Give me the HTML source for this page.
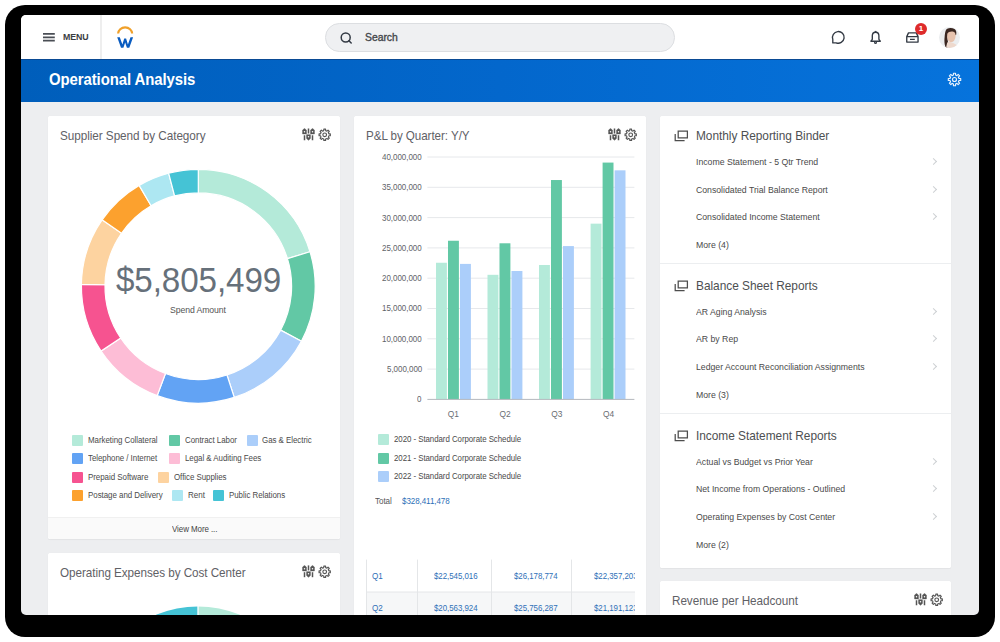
<!DOCTYPE html>
<html><head><meta charset="utf-8">
<style>
*{margin:0;padding:0;box-sizing:border-box}
html,body{width:1000px;height:642px;overflow:hidden;background:#fff;font-family:"Liberation Sans",sans-serif}
#frame{position:absolute;left:5px;top:5px;width:990px;height:632px;background:#000;border-radius:20px}
#screen{position:absolute;left:21px;top:15px;width:958px;height:600px;border-radius:5px;overflow:hidden;background:#edeef0}
#in{position:absolute;left:-21px;top:-15px;width:1000px;height:642px}
.a{position:absolute;white-space:nowrap}
#hdr{position:absolute;left:21px;top:15px;width:958px;height:44px;background:#fff}
#band{position:absolute;left:21px;top:59px;width:958px;height:43px;background:linear-gradient(90deg,#005ebb 0%,#0367cc 50%,#0673dc 100%)}
#band:before{content:"";position:absolute;left:0;top:0;right:0;height:1px;background:#0a4a94}
.card{position:absolute;background:#fff;border-radius:1.5px;box-shadow:0 0 1px rgba(0,0,0,.07),0 1px 1px rgba(0,0,0,.04)}
.ttl{position:absolute;font-size:12.5px;color:#5f6166;white-space:nowrap}
.sw{position:absolute;width:11px;height:11px;border-radius:1px}
.lg{position:absolute;font-size:9px;color:#444;white-space:nowrap}
.li{position:absolute;font-size:9.2px;color:#333;white-space:nowrap}
.st{position:absolute;font-size:12.5px;color:#333;white-space:nowrap}
.ax{position:absolute;font-size:9px;color:#5f6368;text-align:right;width:60px;white-space:nowrap}
.tb{position:absolute;font-size:9px;color:#2e6fb7;white-space:nowrap}
.chev{position:absolute;width:5px;height:5px;border-right:1px solid #cdd0d3;border-top:1px solid #cdd0d3;transform:rotate(45deg)}
</style></head><body>
<div id="frame"></div>
<div id="screen"><div id="in">

  <div id="hdr"></div>
  <div id="band"></div>
  <svg class="a" style="left:40px;top:30px" width="18" height="14" viewBox="40 30 18 14"><path d="M43 33.9H54.8M43 37.3H54.8M43 40.7H54.8" stroke="#4a4e55" stroke-width="1.7"/></svg>
  <div class="a" style="left:62.60px;top:33.33px;font-size:9.3px;line-height:9.3px;letter-spacing:-0.133px;color:#3a3d42;font-weight:bold;transform:scaleX(0.9451);transform-origin:0.00px 0;">MENU</div>
  <div class="a" style="left:100px;top:15px;width:1.5px;height:44px;background:#eeeeee"></div>
  <svg class="a" style="left:110px;top:22px" width="30" height="30" viewBox="110 22 30 30">
    <path d="M118.15 33.6 A7 6.2 0 0 1 132.15 33.6" fill="none" stroke="#f0a02a" stroke-width="2.2"/>
    <path d="M117.2 37.2 L119.8 37.2 L122.4 44.4 L124.2 38.6 L126.1 38.6 L127.9 44.4 L130.5 37.2 L133.1 37.2 L129.3 47.8 L126.9 47.8 L125.15 42.6 L123.4 47.8 L121 47.8 Z" fill="#0a5cc0"/>
  </svg>
  <div class="a" style="left:325px;top:23px;width:350px;height:28.6px;border-radius:14.3px;background:#eff0f2;border:1px solid #dcdee1"></div>
  <svg class="a" style="left:338px;top:30px" width="16" height="16" viewBox="0 0 16 16">
    <circle cx="7.7" cy="7.5" r="4.5" fill="none" stroke="#333a44" stroke-width="1.5"/>
    <path d="M10.9 10.7 L13.2 13" stroke="#333a44" stroke-width="1.5" stroke-linecap="round"/>
  </svg>
  <div class="a" style="left:365.20px;top:32.80px;font-size:10.4px;line-height:10.4px;letter-spacing:-0.006px;color:#45484c;transform:scaleX(0.9964);transform-origin:0.00px 0;-webkit-text-stroke:0.35px #45484c;">Search</div>
  <svg class="a" style="left:828px;top:27px" width="20" height="20" viewBox="0 0 20 20">
    <path d="M4.8 15.9 L4.80 12.40 A5.85 5.85 0 1 1 8.11 15.82 Z" fill="none" stroke="#333a44" stroke-width="1.35" stroke-linejoin="round"/>
  </svg>
  <svg class="a" style="left:866px;top:27px" width="20" height="20" viewBox="0 0 20 20">
    <path d="M4.9 14.2 H14.3 L12.9 12.3 V8.8 C12.9 6.6 11.4 5.2 9.6 5.2 C7.8 5.2 6.3 6.6 6.3 8.8 V12.3 Z" fill="none" stroke="#333a44" stroke-width="1.35" stroke-linejoin="round"/>
    <path d="M8.8 5 L9.6 3.9 L10.4 5Z" fill="#333a44" stroke="#333a44" stroke-width=".6" stroke-linejoin="round"/>
    <circle cx="9.5" cy="15.6" r=".95" fill="none" stroke="#333a44" stroke-width="1.1"/>
  </svg>
  <svg class="a" style="left:902px;top:27px" width="20" height="20" viewBox="0 0 20 20">
    <path d="M4.75 9.6 L6.5 5.9 H14.3 L16.05 9.6 V15.05 H4.75 Z M4.75 9.6 H16.05" fill="none" stroke="#333a44" stroke-width="1.35" stroke-linejoin="round"/>
    <path d="M8 12.4 H12.8" stroke="#333a44" stroke-width="1.3"/>
  </svg>
  <div class="a" style="left:914.8px;top:23.3px;width:12.2px;height:12.2px;border-radius:50%;background:#de2b2b;color:#fff;font-size:8px;font-weight:bold;text-align:center;line-height:12.2px">1</div>
  <div class="a" style="left:939px;top:26.8px;width:21px;height:21px;border-radius:50%;overflow:hidden;background:#ebedef">
  <svg class="a" style="left:0;top:0" width="21" height="21" viewBox="939 26.8 21 21">
      <path d="M945.5 31 C946 27.5 951.5 26.8 954.5 28.8 C956.6 30.2 956.6 33 956 35 L952 33 L947.5 36 C947.3 39 947.8 42 949 44.5 C948.6 46 947.6 47.5 946.2 48 C944.3 45 944.2 40.5 944.6 37 C944.8 34.5 945 32.5 945.5 31Z" fill="#3a2620"/>
      <path d="M947.3 33.5 C948.5 31 953 30.5 955 32.5 C956 34.5 955.8 38 954.2 40.2 C952.6 42.2 949.8 42.2 948.4 40.5 C947.2 38.8 946.9 35.6 947.3 33.5Z" fill="#e6c2ad"/>
      <path d="M947.5 42 C949 41.5 952 41.8 954.5 43.5 C957 44.5 958 46.5 958.5 49 L946 49 C946.3 46 946.8 43.5 947.5 42Z" fill="#eed9cd"/>
  </svg></div>
  <div class="a" style="left:48.80px;top:71.59px;font-size:15.6px;line-height:15.6px;letter-spacing:-0.090px;color:#fff;font-weight:bold;transform:scaleX(0.9575);transform-origin:0.00px 0;">Operational Analysis</div>
  <svg class="a" style="left:946px;top:71px" width="17" height="17" viewBox="0 0 17 17">
    <path d="M7.46 4.02 L7.47 2.29 L9.53 2.29 L9.54 4.02 L10.93 4.60 L12.16 3.37 L13.63 4.84 L12.40 6.07 L12.98 7.46 L14.71 7.47 L14.71 9.53 L12.98 9.54 L12.40 10.93 L13.63 12.16 L12.16 13.63 L10.93 12.40 L9.54 12.98 L9.53 14.71 L7.47 14.71 L7.46 12.98 L6.07 12.40 L4.84 13.63 L3.37 12.16 L4.60 10.93 L4.02 9.54 L2.29 9.53 L2.29 7.47 L4.02 7.46 L4.60 6.07 L3.37 4.84 L4.84 3.37 L6.07 4.60Z" fill="none" stroke="#e8f1fc" stroke-width="1.15" stroke-linejoin="round"/><circle cx="8.5" cy="8.5" r="2" fill="none" stroke="#e8f1fc" stroke-width="1.15"/>
  </svg>


  <div class="card" style="left:48px;top:116px;width:292px;height:423px"></div>
  <div class="a" style="left:60.20px;top:130.26px;font-size:12.1px;line-height:12.1px;letter-spacing:-0.047px;color:#5f6166;transform:scaleX(0.9696);transform-origin:0.00px 0;">Supplier Spend by Category</div>
  <svg class="a" style="left:300px;top:128px" width="34" height="15" viewBox="0 0 34 15"><path d="M4.5 7.2 V12.2" stroke="#555" stroke-width="1.5"/><path d="M4.5 0.4 L6.4 2.1 V5.9 H2.6 V2.1Z" fill="#555" stroke="#555" stroke-width=".5" stroke-linejoin="round"/><circle cx="4.5" cy="3.8" r=".75" fill="#fff"/><path d="M8.5 0.4 V5.4" stroke="#555" stroke-width="1.5"/><path d="M6.6 6.7 H10.4 V10.5 L8.5 12.2 L6.6 10.5Z" fill="#555" stroke="#555" stroke-width=".5" stroke-linejoin="round"/><circle cx="8.5" cy="8.7" r=".75" fill="#fff"/><path d="M12.5 7.2 V12.2" stroke="#555" stroke-width="1.5"/><path d="M12.5 0.4 L14.4 2.1 V5.9 H10.6 V2.1Z" fill="#555" stroke="#555" stroke-width=".5" stroke-linejoin="round"/><circle cx="12.5" cy="3.8" r=".75" fill="#fff"/><path d="M23.76 2.60 L23.81 1.17 L25.59 1.17 L25.64 2.60 L27.00 3.17 L28.05 2.19 L29.31 3.45 L28.33 4.50 L28.90 5.86 L30.33 5.91 L30.33 7.69 L28.90 7.74 L28.33 9.10 L29.31 10.15 L28.05 11.41 L27.00 10.43 L25.64 11.00 L25.59 12.43 L23.81 12.43 L23.76 11.00 L22.40 10.43 L21.35 11.41 L20.09 10.15 L21.07 9.10 L20.50 7.74 L19.07 7.69 L19.07 5.91 L20.50 5.86 L21.07 4.50 L20.09 3.45 L21.35 2.19 L22.40 3.17Z" fill="none" stroke="#555" stroke-width="1.15" stroke-linejoin="round"/><circle cx="24.7" cy="6.8" r="1.85" fill="none" stroke="#555" stroke-width="1.15"/></svg>
  <svg class="a" style="left:0;top:0" width="400" height="420" viewBox="0 0 400 420">
<path d="M198.30 169.30A116.9 116.9 0 0 1 310.00 251.73L287.45 258.69A93.3 93.3 0 0 0 198.30 192.90Z" fill="#b4ead9" stroke="#fff" stroke-width="1.2"/>
<path d="M310.00 251.73A116.9 116.9 0 0 1 301.42 341.26L280.60 330.15A93.3 93.3 0 0 0 287.45 258.69Z" fill="#62c8a5" stroke="#fff" stroke-width="1.2"/>
<path d="M301.42 341.26A116.9 116.9 0 0 1 234.23 397.44L226.98 374.98A93.3 93.3 0 0 0 280.60 330.15Z" fill="#abcefa" stroke="#fff" stroke-width="1.2"/>
<path d="M234.23 397.44A116.9 116.9 0 0 1 157.17 395.63L165.47 373.53A93.3 93.3 0 0 0 226.98 374.98Z" fill="#62a3f4" stroke="#fff" stroke-width="1.2"/>
<path d="M157.17 395.63A116.9 116.9 0 0 1 101.04 351.06L120.68 337.97A93.3 93.3 0 0 0 165.47 373.53Z" fill="#fdbdd6" stroke="#fff" stroke-width="1.2"/>
<path d="M101.04 351.06A116.9 116.9 0 0 1 81.41 284.36L105.01 284.73A93.3 93.3 0 0 0 120.68 337.97Z" fill="#f65390" stroke="#fff" stroke-width="1.2"/>
<path d="M81.41 284.36A116.9 116.9 0 0 1 102.08 219.82L121.50 233.22A93.3 93.3 0 0 0 105.01 284.73Z" fill="#fdd3a0" stroke="#fff" stroke-width="1.2"/>
<path d="M102.08 219.82A116.9 116.9 0 0 1 139.14 185.37L151.09 205.73A93.3 93.3 0 0 0 121.50 233.22Z" fill="#fca12e" stroke="#fff" stroke-width="1.2"/>
<path d="M139.14 185.37A116.9 116.9 0 0 1 168.64 173.13L174.62 195.95A93.3 93.3 0 0 0 151.09 205.73Z" fill="#ade7f2" stroke="#fff" stroke-width="1.2"/>
<path d="M168.64 173.13A116.9 116.9 0 0 1 198.30 169.30L198.30 192.90A93.3 93.3 0 0 0 174.62 195.95Z" fill="#45c3d5" stroke="#fff" stroke-width="1.2"/>
  </svg>
  <div class="a" style="left:0;top:0;width:400px;height:400px;transform-origin:115.5px 0;transform:scaleX(0.95)"><div class="a" style="left:115.50px;top:263.35px;font-size:35.5px;line-height:35.5px;letter-spacing:-0.083px;color:#66707a;transform:scaleX(0.9834);transform-origin:0.00px 0;">$5,805,499</div></div>
  <div class="a" style="left:170.20px;top:306.33px;font-size:9.3px;line-height:9.3px;letter-spacing:-0.098px;color:#555;transform:scaleX(0.9342);transform-origin:0.00px 0;">Spend Amount</div>
  <div class="sw" style="left:72px;top:434.7px;background:#b4ead9"></div><div class="a" style="left:88.00px;top:435.67px;font-size:8.3px;line-height:8.3px;letter-spacing:-0.046px;color:#4a4a4a;transform:scaleX(0.9547);transform-origin:0.00px 0;">Marketing Collateral</div><div class="sw" style="left:168.6px;top:434.7px;background:#62c8a5"></div><div class="a" style="left:184.50px;top:435.67px;font-size:8.3px;line-height:8.3px;letter-spacing:-0.046px;color:#4a4a4a;transform:scaleX(0.9583);transform-origin:0.00px 0;">Contract Labor</div><div class="sw" style="left:246.6px;top:434.7px;background:#abcefa"></div><div class="a" style="left:262.00px;top:435.67px;font-size:8.3px;line-height:8.3px;letter-spacing:-0.046px;color:#4a4a4a;transform:scaleX(0.9565);transform-origin:0.00px 0;">Gas &amp; Electric</div><div class="sw" style="left:72px;top:453.2px;background:#62a3f4"></div><div class="a" style="left:88.00px;top:454.17px;font-size:8.3px;line-height:8.3px;letter-spacing:-0.046px;color:#4a4a4a;transform:scaleX(0.9544);transform-origin:0.00px 0;">Telephone / Internet</div><div class="sw" style="left:168.6px;top:453.2px;background:#fdbdd6"></div><div class="a" style="left:184.50px;top:454.17px;font-size:8.3px;line-height:8.3px;letter-spacing:-0.046px;color:#4a4a4a;transform:scaleX(0.9564);transform-origin:0.00px 0;">Legal &amp; Auditing Fees</div><div class="sw" style="left:72px;top:471.7px;background:#f65390"></div><div class="a" style="left:88.00px;top:472.67px;font-size:8.3px;line-height:8.3px;letter-spacing:-0.046px;color:#4a4a4a;transform:scaleX(0.9585);transform-origin:0.00px 0;">Prepaid Software</div><div class="sw" style="left:158px;top:471.7px;background:#fdd3a0"></div><div class="a" style="left:174.00px;top:472.67px;font-size:8.3px;line-height:8.3px;letter-spacing:-0.046px;color:#4a4a4a;transform:scaleX(0.9557);transform-origin:0.00px 0;">Office Supplies</div><div class="sw" style="left:72px;top:490.2px;background:#fca12e"></div><div class="a" style="left:88.00px;top:491.17px;font-size:8.3px;line-height:8.3px;letter-spacing:-0.046px;color:#4a4a4a;transform:scaleX(0.9576);transform-origin:0.00px 0;">Postage and Delivery</div><div class="sw" style="left:172px;top:490.2px;background:#ade7f2"></div><div class="a" style="left:187.50px;top:491.17px;font-size:8.3px;line-height:8.3px;letter-spacing:-0.045px;color:#4a4a4a;transform:scaleX(0.9699);transform-origin:0.00px 0;">Rent</div><div class="sw" style="left:213px;top:490.2px;background:#45c3d5"></div><div class="a" style="left:229.00px;top:491.17px;font-size:8.3px;line-height:8.3px;letter-spacing:-0.046px;color:#4a4a4a;transform:scaleX(0.9556);transform-origin:0.00px 0;">Public Relations</div>
  <div class="a" style="left:48px;top:517px;width:292px;height:22px;background:#fafafa;border-top:1px solid #f0f0f0;border-radius:0 0 3px 3px"></div>
  <div class="a" style="left:171.50px;top:524.52px;font-size:8.6px;line-height:8.6px;letter-spacing:-0.081px;color:#444;transform:scaleX(0.9276);transform-origin:0.00px 0;">View More ...</div>

  <div class="card" style="left:48px;top:553px;width:292px;height:80px"></div>
  <div class="a" style="left:60.40px;top:567.16px;font-size:12.1px;line-height:12.1px;letter-spacing:-0.052px;color:#5f6166;transform:scaleX(0.9666);transform-origin:0.00px 0;">Operating Expenses by Cost Center</div>
  <svg class="a" style="left:300px;top:565px" width="34" height="15" viewBox="0 0 34 15"><path d="M4.5 7.2 V12.2" stroke="#555" stroke-width="1.5"/><path d="M4.5 0.4 L6.4 2.1 V5.9 H2.6 V2.1Z" fill="#555" stroke="#555" stroke-width=".5" stroke-linejoin="round"/><circle cx="4.5" cy="3.8" r=".75" fill="#fff"/><path d="M8.5 0.4 V5.4" stroke="#555" stroke-width="1.5"/><path d="M6.6 6.7 H10.4 V10.5 L8.5 12.2 L6.6 10.5Z" fill="#555" stroke="#555" stroke-width=".5" stroke-linejoin="round"/><circle cx="8.5" cy="8.7" r=".75" fill="#fff"/><path d="M12.5 7.2 V12.2" stroke="#555" stroke-width="1.5"/><path d="M12.5 0.4 L14.4 2.1 V5.9 H10.6 V2.1Z" fill="#555" stroke="#555" stroke-width=".5" stroke-linejoin="round"/><circle cx="12.5" cy="3.8" r=".75" fill="#fff"/><path d="M23.76 2.60 L23.81 1.17 L25.59 1.17 L25.64 2.60 L27.00 3.17 L28.05 2.19 L29.31 3.45 L28.33 4.50 L28.90 5.86 L30.33 5.91 L30.33 7.69 L28.90 7.74 L28.33 9.10 L29.31 10.15 L28.05 11.41 L27.00 10.43 L25.64 11.00 L25.59 12.43 L23.81 12.43 L23.76 11.00 L22.40 10.43 L21.35 11.41 L20.09 10.15 L21.07 9.10 L20.50 7.74 L19.07 7.69 L19.07 5.91 L20.50 5.86 L21.07 4.50 L20.09 3.45 L21.35 2.19 L22.40 3.17Z" fill="none" stroke="#555" stroke-width="1.15" stroke-linejoin="round"/><circle cx="24.7" cy="6.8" r="1.85" fill="none" stroke="#555" stroke-width="1.15"/></svg>
  <svg class="a" style="left:0;top:0" width="400" height="642" viewBox="0 0 400 642">
    <path d="M198 606.4 A108 108 0 0 1 306 714.4 L198 714.4Z" fill="#b4ead9"/>
    <path d="M198 606.4 A108 108 0 0 0 90 714.4 L198 714.4Z" fill="#45c3d5"/>
    <path d="M198 605 V640" stroke="#fff" stroke-width="1.3"/>
  </svg>

  <div class="card" style="left:354px;top:116px;width:292px;height:520px"></div>
  <div class="a" style="left:366.20px;top:130.26px;font-size:12.1px;line-height:12.1px;letter-spacing:-0.062px;color:#5f6166;transform:scaleX(0.9607);transform-origin:0.00px 0;">P&amp;L by Quarter: Y/Y</div>
  <svg class="a" style="left:606px;top:128px" width="34" height="15" viewBox="0 0 34 15"><path d="M4.5 7.2 V12.2" stroke="#555" stroke-width="1.5"/><path d="M4.5 0.4 L6.4 2.1 V5.9 H2.6 V2.1Z" fill="#555" stroke="#555" stroke-width=".5" stroke-linejoin="round"/><circle cx="4.5" cy="3.8" r=".75" fill="#fff"/><path d="M8.5 0.4 V5.4" stroke="#555" stroke-width="1.5"/><path d="M6.6 6.7 H10.4 V10.5 L8.5 12.2 L6.6 10.5Z" fill="#555" stroke="#555" stroke-width=".5" stroke-linejoin="round"/><circle cx="8.5" cy="8.7" r=".75" fill="#fff"/><path d="M12.5 7.2 V12.2" stroke="#555" stroke-width="1.5"/><path d="M12.5 0.4 L14.4 2.1 V5.9 H10.6 V2.1Z" fill="#555" stroke="#555" stroke-width=".5" stroke-linejoin="round"/><circle cx="12.5" cy="3.8" r=".75" fill="#fff"/><path d="M23.76 2.60 L23.81 1.17 L25.59 1.17 L25.64 2.60 L27.00 3.17 L28.05 2.19 L29.31 3.45 L28.33 4.50 L28.90 5.86 L30.33 5.91 L30.33 7.69 L28.90 7.74 L28.33 9.10 L29.31 10.15 L28.05 11.41 L27.00 10.43 L25.64 11.00 L25.59 12.43 L23.81 12.43 L23.76 11.00 L22.40 10.43 L21.35 11.41 L20.09 10.15 L21.07 9.10 L20.50 7.74 L19.07 7.69 L19.07 5.91 L20.50 5.86 L21.07 4.50 L20.09 3.45 L21.35 2.19 L22.40 3.17Z" fill="none" stroke="#555" stroke-width="1.15" stroke-linejoin="round"/><circle cx="24.7" cy="6.8" r="1.85" fill="none" stroke="#555" stroke-width="1.15"/></svg>
  <svg class="a" style="left:0;top:0" width="660" height="430" viewBox="0 0 660 430"><path d="M427.4 369.1 H634.4" stroke="#e6e8eb" stroke-width="1"/><path d="M427.4 338.8 H634.4" stroke="#e6e8eb" stroke-width="1"/><path d="M427.4 308.5 H634.4" stroke="#e6e8eb" stroke-width="1"/><path d="M427.4 278.2 H634.4" stroke="#e6e8eb" stroke-width="1"/><path d="M427.4 247.9 H634.4" stroke="#e6e8eb" stroke-width="1"/><path d="M427.4 217.6 H634.4" stroke="#e6e8eb" stroke-width="1"/><path d="M427.4 187.3 H634.4" stroke="#e6e8eb" stroke-width="1"/><path d="M427.4 157.0 H634.4" stroke="#e6e8eb" stroke-width="1"/><rect x="436.00" y="262.75" width="10.9" height="136.65" fill="#b4ead9"/><rect x="448.00" y="240.75" width="10.9" height="158.65" fill="#62c8a5"/><rect x="460.00" y="263.90" width="10.9" height="135.50" fill="#abcefa"/><rect x="487.50" y="274.81" width="10.9" height="124.59" fill="#b4ead9"/><rect x="499.50" y="243.29" width="10.9" height="156.11" fill="#62c8a5"/><rect x="511.50" y="270.99" width="10.9" height="128.41" fill="#abcefa"/><rect x="539.00" y="264.99" width="10.9" height="134.41" fill="#b4ead9"/><rect x="551.00" y="180.03" width="10.9" height="219.37" fill="#62c8a5"/><rect x="563.00" y="246.08" width="10.9" height="153.32" fill="#abcefa"/><rect x="590.60" y="223.66" width="10.9" height="175.74" fill="#b4ead9"/><rect x="602.60" y="162.58" width="10.9" height="236.82" fill="#62c8a5"/><rect x="614.60" y="170.33" width="10.9" height="229.07" fill="#abcefa"/><path d="M427.4 399.4 H634.4" stroke="#b4b8bd" stroke-width="1"/></svg><div class="a" style="left:382.11px;top:153.96px;font-size:8.2px;line-height:8.2px;letter-spacing:-0.031px;color:#5f6368;transform:scaleX(0.9737);transform-origin:0.00px 0;">40,000,000</div><div class="a" style="left:382.11px;top:184.26px;font-size:8.2px;line-height:8.2px;letter-spacing:-0.031px;color:#5f6368;transform:scaleX(0.9737);transform-origin:0.00px 0;">35,000,000</div><div class="a" style="left:382.11px;top:214.56px;font-size:8.2px;line-height:8.2px;letter-spacing:-0.031px;color:#5f6368;transform:scaleX(0.9737);transform-origin:0.00px 0;">30,000,000</div><div class="a" style="left:382.11px;top:244.86px;font-size:8.2px;line-height:8.2px;letter-spacing:-0.031px;color:#5f6368;transform:scaleX(0.9737);transform-origin:0.00px 0;">25,000,000</div><div class="a" style="left:382.11px;top:275.16px;font-size:8.2px;line-height:8.2px;letter-spacing:-0.031px;color:#5f6368;transform:scaleX(0.9737);transform-origin:0.00px 0;">20,000,000</div><div class="a" style="left:382.11px;top:305.46px;font-size:8.2px;line-height:8.2px;letter-spacing:-0.031px;color:#5f6368;transform:scaleX(0.9737);transform-origin:0.00px 0;">15,000,000</div><div class="a" style="left:382.11px;top:335.76px;font-size:8.2px;line-height:8.2px;letter-spacing:-0.031px;color:#5f6368;transform:scaleX(0.9737);transform-origin:0.00px 0;">10,000,000</div><div class="a" style="left:386.52px;top:366.06px;font-size:8.2px;line-height:8.2px;letter-spacing:-0.031px;color:#5f6368;transform:scaleX(0.9737);transform-origin:0.00px 0;">5,000,000</div><div class="a" style="left:417.24px;top:396.36px;font-size:8.2px;line-height:8.2px;letter-spacing:-0.031px;color:#5f6368;transform:scaleX(0.9737);transform-origin:0.00px 0;">0</div><div class="a" style="left:447.70px;top:410.39px;font-size:8.4px;line-height:8.4px;letter-spacing:0.000px;color:#6a6e73;">Q1</div><div class="a" style="left:499.45px;top:410.39px;font-size:8.4px;line-height:8.4px;letter-spacing:0.000px;color:#6a6e73;">Q2</div><div class="a" style="left:551.20px;top:410.39px;font-size:8.4px;line-height:8.4px;letter-spacing:0.000px;color:#6a6e73;">Q3</div><div class="a" style="left:602.95px;top:410.39px;font-size:8.4px;line-height:8.4px;letter-spacing:0.000px;color:#6a6e73;">Q4</div>
  <div class="sw" style="left:377.7px;top:434.4px;background:#b4ead9"></div><div class="a" style="left:394.00px;top:435.37px;font-size:8.3px;line-height:8.3px;letter-spacing:-0.054px;color:#4a4a4a;transform:scaleX(0.9501);transform-origin:0.00px 0;">2020 - Standard Corporate Schedule</div><div class="sw" style="left:377.7px;top:452.9px;background:#62c8a5"></div><div class="a" style="left:394.00px;top:453.87px;font-size:8.3px;line-height:8.3px;letter-spacing:-0.054px;color:#4a4a4a;transform:scaleX(0.9501);transform-origin:0.00px 0;">2021 - Standard Corporate Schedule</div><div class="sw" style="left:377.7px;top:471.4px;background:#abcefa"></div><div class="a" style="left:394.00px;top:472.37px;font-size:8.3px;line-height:8.3px;letter-spacing:-0.054px;color:#4a4a4a;transform:scaleX(0.9501);transform-origin:0.00px 0;">2022 - Standard Corporate Schedule</div>
  <div class="a" style="left:374.50px;top:497.30px;font-size:8.5px;line-height:8.5px;letter-spacing:-0.061px;color:#555;transform:scaleX(0.9487);transform-origin:0.00px 0;">Total</div>
  <div class="a" style="left:401.50px;top:497.30px;font-size:8.5px;line-height:8.5px;letter-spacing:-0.071px;color:#2e6fb7;transform:scaleX(0.9429);transform-origin:0.00px 0;">$328,411,478</div>
  <div class="a" style="left:366px;top:592px;width:269px;height:40px;background:#f6f7f8"></div><svg class="a" style="left:0;top:0" width="660" height="642" viewBox="0 0 660 642"><path d="M366.5 559.6 V640" stroke="#e4e6e8" stroke-width="1"/><path d="M417.5 559.6 V640" stroke="#e4e6e8" stroke-width="1"/><path d="M491.5 559.6 V640" stroke="#e4e6e8" stroke-width="1"/><path d="M571.5 559.6 V640" stroke="#e4e6e8" stroke-width="1"/><path d="M366 592 H635" stroke="#e4e6e8" stroke-width="1"/></svg><div class="a" style="left:372.00px;top:572.86px;font-size:8.2px;line-height:8.2px;letter-spacing:-0.041px;color:#2e6fb7;transform:scaleX(0.9854);transform-origin:0.00px 0;">Q1</div><div class="a" style="left:434.40px;top:572.86px;font-size:8.2px;line-height:8.2px;letter-spacing:-0.041px;color:#2e6fb7;transform:scaleX(0.9649);transform-origin:0.00px 0;">$22,545,016</div><div class="a" style="left:514.40px;top:572.86px;font-size:8.2px;line-height:8.2px;letter-spacing:-0.041px;color:#2e6fb7;transform:scaleX(0.9649);transform-origin:0.00px 0;">$26,178,774</div><div class="a" style="left:572px;top:567.8px;width:62.5px;height:16px;overflow:hidden"><div class="a" style="left:-572px;top:-567.8px;width:700px;height:700px"><div class="a" style="left:594.00px;top:572.86px;font-size:8.2px;line-height:8.2px;letter-spacing:-0.041px;color:#2e6fb7;transform:scaleX(0.9649);transform-origin:0.00px 0;">$22,357,203</div></div></div><div class="a" style="left:372.00px;top:605.36px;font-size:8.2px;line-height:8.2px;letter-spacing:-0.041px;color:#2e6fb7;transform:scaleX(0.9854);transform-origin:0.00px 0;">Q2</div><div class="a" style="left:434.40px;top:605.36px;font-size:8.2px;line-height:8.2px;letter-spacing:-0.041px;color:#2e6fb7;transform:scaleX(0.9649);transform-origin:0.00px 0;">$20,563,924</div><div class="a" style="left:514.40px;top:605.36px;font-size:8.2px;line-height:8.2px;letter-spacing:-0.041px;color:#2e6fb7;transform:scaleX(0.9649);transform-origin:0.00px 0;">$25,756,287</div><div class="a" style="left:572px;top:600.3px;width:62.5px;height:16px;overflow:hidden"><div class="a" style="left:-572px;top:-600.3px;width:700px;height:700px"><div class="a" style="left:594.00px;top:605.36px;font-size:8.2px;line-height:8.2px;letter-spacing:-0.041px;color:#2e6fb7;transform:scaleX(0.9649);transform-origin:0.00px 0;">$21,191,123</div></div></div>

  <div class="card" style="left:659.5px;top:116px;width:291.8px;height:452px"></div>
  <svg class="a" style="left:673.8px;top:130.15px" width="16" height="13" viewBox="0 0 16 13"><path d="M4.2 1.2 H13.4 V7.9 H4.2 Z" fill="none" stroke="#4d4d4d" stroke-width="1.25"/><path d="M1.2 4.1 V10.6 H10.6" fill="none" stroke="#4d4d4d" stroke-width="1.25"/></svg><div class="a" style="left:696.40px;top:129.91px;font-size:12.1px;line-height:12.1px;letter-spacing:-0.028px;color:#4d4f52;transform:scaleX(0.9816);transform-origin:0.00px 0;">Monthly Reporting Binder</div><div class="a" style="left:696.40px;top:158.20px;font-size:8.8px;line-height:8.8px;letter-spacing:-0.011px;color:#4a4a4a;transform:scaleX(0.9900);transform-origin:0.00px 0;">Income Statement - 5 Qtr Trend</div><div class="chev" style="left:930.5px;top:159.2px"></div><div class="a" style="left:696.40px;top:185.60px;font-size:8.8px;line-height:8.8px;letter-spacing:-0.011px;color:#4a4a4a;transform:scaleX(0.9898);transform-origin:0.00px 0;">Consolidated Trial Balance Report</div><div class="chev" style="left:930.5px;top:186.6px"></div><div class="a" style="left:696.40px;top:213.00px;font-size:8.8px;line-height:8.8px;letter-spacing:-0.011px;color:#4a4a4a;transform:scaleX(0.9905);transform-origin:0.00px 0;">Consolidated Income Statement</div><div class="chev" style="left:930.5px;top:213.9px"></div><div class="a" style="left:696.40px;top:241.40px;font-size:8.8px;line-height:8.8px;letter-spacing:-0.011px;color:#4a4a4a;transform:scaleX(0.9910);transform-origin:0.00px 0;">More (4)</div><div class="a" style="left:660px;top:263.2px;width:291px;height:1px;background:#eceef0"></div><svg class="a" style="left:673.8px;top:280.0px" width="16" height="13" viewBox="0 0 16 13"><path d="M4.2 1.2 H13.4 V7.9 H4.2 Z" fill="none" stroke="#4d4d4d" stroke-width="1.25"/><path d="M1.2 4.1 V10.6 H10.6" fill="none" stroke="#4d4d4d" stroke-width="1.25"/></svg><div class="a" style="left:696.40px;top:279.76px;font-size:12.1px;line-height:12.1px;letter-spacing:-0.028px;color:#4d4f52;transform:scaleX(0.9825);transform-origin:0.00px 0;">Balance Sheet Reports</div><div class="a" style="left:696.40px;top:308.05px;font-size:8.8px;line-height:8.8px;letter-spacing:-0.011px;color:#4a4a4a;transform:scaleX(0.9905);transform-origin:0.00px 0;">AR Aging Analysis</div><div class="chev" style="left:930.5px;top:309.0px"></div><div class="a" style="left:696.40px;top:335.45px;font-size:8.8px;line-height:8.8px;letter-spacing:-0.011px;color:#4a4a4a;transform:scaleX(0.9920);transform-origin:0.00px 0;">AR by Rep</div><div class="chev" style="left:930.5px;top:336.4px"></div><div class="a" style="left:696.40px;top:362.85px;font-size:8.8px;line-height:8.8px;letter-spacing:-0.011px;color:#4a4a4a;transform:scaleX(0.9900);transform-origin:0.00px 0;">Ledger Account Reconciliation Assignments</div><div class="chev" style="left:930.5px;top:363.8px"></div><div class="a" style="left:696.40px;top:391.25px;font-size:8.8px;line-height:8.8px;letter-spacing:-0.011px;color:#4a4a4a;transform:scaleX(0.9910);transform-origin:0.00px 0;">More (3)</div><div class="a" style="left:660px;top:413.2px;width:291px;height:1px;background:#eceef0"></div><svg class="a" style="left:673.8px;top:430.0px" width="16" height="13" viewBox="0 0 16 13"><path d="M4.2 1.2 H13.4 V7.9 H4.2 Z" fill="none" stroke="#4d4d4d" stroke-width="1.25"/><path d="M1.2 4.1 V10.6 H10.6" fill="none" stroke="#4d4d4d" stroke-width="1.25"/></svg><div class="a" style="left:696.40px;top:429.76px;font-size:12.1px;line-height:12.1px;letter-spacing:-0.028px;color:#4d4f52;transform:scaleX(0.9826);transform-origin:0.00px 0;">Income Statement Reports</div><div class="a" style="left:696.40px;top:458.05px;font-size:8.8px;line-height:8.8px;letter-spacing:-0.011px;color:#4a4a4a;transform:scaleX(0.9896);transform-origin:0.00px 0;">Actual vs Budget vs Prior Year</div><div class="chev" style="left:930.5px;top:459.0px"></div><div class="a" style="left:696.40px;top:485.45px;font-size:8.8px;line-height:8.8px;letter-spacing:-0.011px;color:#4a4a4a;transform:scaleX(0.9899);transform-origin:0.00px 0;">Net Income from Operations - Outlined</div><div class="chev" style="left:930.5px;top:486.4px"></div><div class="a" style="left:696.40px;top:512.85px;font-size:8.8px;line-height:8.8px;letter-spacing:-0.011px;color:#4a4a4a;transform:scaleX(0.9903);transform-origin:0.00px 0;">Operating Expenses by Cost Center</div><div class="chev" style="left:930.5px;top:513.8px"></div><div class="a" style="left:696.40px;top:541.25px;font-size:8.8px;line-height:8.8px;letter-spacing:-0.011px;color:#4a4a4a;transform:scaleX(0.9910);transform-origin:0.00px 0;">More (2)</div>

  <div class="card" style="left:659.5px;top:580.6px;width:291.8px;height:60px"></div>
  <div class="a" style="left:671.70px;top:594.96px;font-size:12.1px;line-height:12.1px;letter-spacing:-0.053px;color:#5f6166;transform:scaleX(0.9684);transform-origin:0.00px 0;">Revenue per Headcount</div>
  <svg class="a" style="left:912px;top:593px" width="34" height="15" viewBox="0 0 34 15"><path d="M4.5 7.2 V12.2" stroke="#555" stroke-width="1.5"/><path d="M4.5 0.4 L6.4 2.1 V5.9 H2.6 V2.1Z" fill="#555" stroke="#555" stroke-width=".5" stroke-linejoin="round"/><circle cx="4.5" cy="3.8" r=".75" fill="#fff"/><path d="M8.5 0.4 V5.4" stroke="#555" stroke-width="1.5"/><path d="M6.6 6.7 H10.4 V10.5 L8.5 12.2 L6.6 10.5Z" fill="#555" stroke="#555" stroke-width=".5" stroke-linejoin="round"/><circle cx="8.5" cy="8.7" r=".75" fill="#fff"/><path d="M12.5 7.2 V12.2" stroke="#555" stroke-width="1.5"/><path d="M12.5 0.4 L14.4 2.1 V5.9 H10.6 V2.1Z" fill="#555" stroke="#555" stroke-width=".5" stroke-linejoin="round"/><circle cx="12.5" cy="3.8" r=".75" fill="#fff"/><path d="M23.76 2.60 L23.81 1.17 L25.59 1.17 L25.64 2.60 L27.00 3.17 L28.05 2.19 L29.31 3.45 L28.33 4.50 L28.90 5.86 L30.33 5.91 L30.33 7.69 L28.90 7.74 L28.33 9.10 L29.31 10.15 L28.05 11.41 L27.00 10.43 L25.64 11.00 L25.59 12.43 L23.81 12.43 L23.76 11.00 L22.40 10.43 L21.35 11.41 L20.09 10.15 L21.07 9.10 L20.50 7.74 L19.07 7.69 L19.07 5.91 L20.50 5.86 L21.07 4.50 L20.09 3.45 L21.35 2.19 L22.40 3.17Z" fill="none" stroke="#555" stroke-width="1.15" stroke-linejoin="round"/><circle cx="24.7" cy="6.8" r="1.85" fill="none" stroke="#555" stroke-width="1.15"/></svg>

</div></div>
</body></html>
